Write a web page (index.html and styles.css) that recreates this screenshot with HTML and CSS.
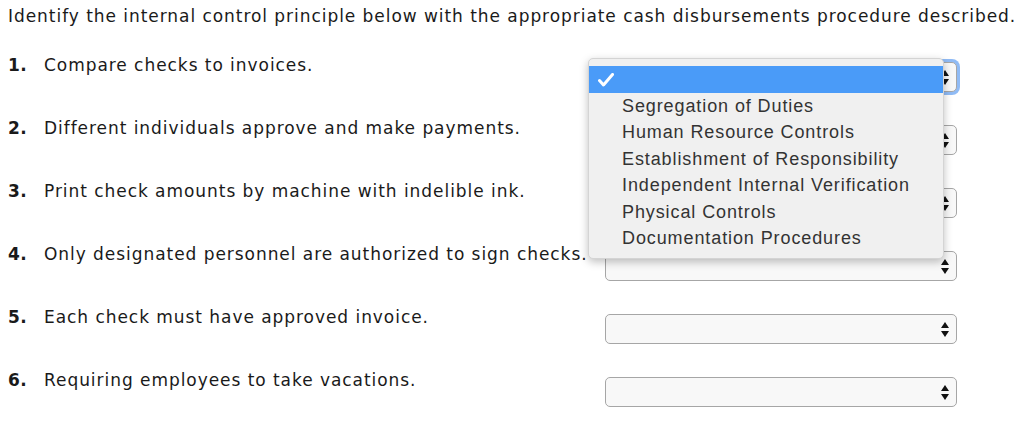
FILE: index.html
```html
<!DOCTYPE html>
<html lang="en">
  <head>
    <meta charset="UTF-8" />
    <meta name="viewport" content="width=device-width, initial-scale=1.0" />
    <title>Internal Control Principles</title>
    <link rel="stylesheet" href="styles.css">
  </head>
  <body>
    <div class="question">
      <p class="prompt">Identify the internal control principle below with the appropriate cash disbursements procedure described.</p>

      <ol class="items">
        <li class="item">
          <span class="num">1.</span>
          <span class="text">Compare checks to invoices.</span>
          <div class="picker is-open">
            <div class="answer"></div>
            <svg class="arrows" width="8" height="15" viewBox="0 0 8 15"><polygon points="0,6 4,0 8,6" /><polygon points="0,9 8,9 4,15" /></svg>
            <ul class="menu">
              <li class="menu-item selected">
                <svg class="check" width="16" height="14" viewBox="0 0 16 14"><polyline points="1.5,7.5 5.5,12 14.5,1.5" /></svg>
              </li>
              <li class="menu-item">Segregation of Duties</li>
              <li class="menu-item">Human Resource Controls</li>
              <li class="menu-item">Establishment of Responsibility</li>
              <li class="menu-item">Independent Internal Verification</li>
              <li class="menu-item">Physical Controls</li>
              <li class="menu-item">Documentation Procedures</li>
            </ul>
          </div>
        </li>
        <li class="item">
          <span class="num">2.</span>
          <span class="text">Different individuals approve and make payments.</span>
          <div class="picker">
            <div class="answer"></div>
            <svg class="arrows" width="8" height="15" viewBox="0 0 8 15"><polygon points="0,6 4,0 8,6" /><polygon points="0,9 8,9 4,15" /></svg>
          </div>
        </li>
        <li class="item">
          <span class="num">3.</span>
          <span class="text">Print check amounts by machine with indelible ink.</span>
          <div class="picker">
            <div class="answer"></div>
            <svg class="arrows" width="8" height="15" viewBox="0 0 8 15"><polygon points="0,6 4,0 8,6" /><polygon points="0,9 8,9 4,15" /></svg>
          </div>
        </li>
        <li class="item">
          <span class="num">4.</span>
          <span class="text">Only designated personnel are authorized to sign checks.</span>
          <div class="picker">
            <div class="answer"></div>
            <svg class="arrows" width="8" height="15" viewBox="0 0 8 15"><polygon points="0,6 4,0 8,6" /><polygon points="0,9 8,9 4,15" /></svg>
          </div>
        </li>
        <li class="item">
          <span class="num">5.</span>
          <span class="text">Each check must have approved invoice.</span>
          <div class="picker">
            <div class="answer"></div>
            <svg class="arrows" width="8" height="15" viewBox="0 0 8 15"><polygon points="0,6 4,0 8,6" /><polygon points="0,9 8,9 4,15" /></svg>
          </div>
        </li>
        <li class="item">
          <span class="num">6.</span>
          <span class="text">Requiring employees to take vacations.</span>
          <div class="picker">
            <div class="answer"></div>
            <svg class="arrows" width="8" height="15" viewBox="0 0 8 15"><polygon points="0,6 4,0 8,6" /><polygon points="0,9 8,9 4,15" /></svg>
          </div>
        </li>
      </ol>
    </div>
  </body>
</html>
```

FILE: styles.css
```css
* {
  margin: 0;
  padding: 0;
  box-sizing: border-box;
}

body {
  font-family: Verdana, 'DejaVu Sans', sans-serif;
  font-size: 17px;
  letter-spacing: 0.95px;
  line-height: 20px;
  color: #1a1a1a;
  background: white;
  padding: 6px 8px;
}

.prompt {
  margin-bottom: 29px;
  white-space: nowrap;
}

.items {
  list-style: none;
}

.item {
  display: grid;
  grid-template-columns: 36px 561px 352px;
  align-items: start;
  height: 63px;
}

.num {
  font-weight: bold;
  letter-spacing: 0.4px;
}

.text {
  white-space: nowrap;
}

.picker {
  position: relative;
  margin-top: 7px;
}

.answer {
  height: 30px;
  background: #f8f8f8;
  border: 1px solid #a6a6a6;
  border-radius: 5px;
}

.arrows {
  position: absolute;
  right: 8px;
  top: 8px;
  fill: #111;
}

.is-open .answer {
  box-shadow: 0 0 0 3px rgba(84, 150, 240, 0.65);
}

/* open dropdown list of the first select */
.menu {
  position: absolute;
  left: -17px;
  top: -4px;
  width: 356px;
  padding: 7px 0 6px;
  list-style: none;
  background: #f0f0f0;
  border: 1px solid #d4d4d4;
  border-radius: 5px;
  box-shadow: 0 3px 9px rgba(0, 0, 0, 0.25);
  font-family: 'Liberation Sans', Arial, sans-serif;
  font-size: 18px;
  letter-spacing: 0.9px;
  color: #333;
  z-index: 2;
}

.menu-item {
  height: 26.5px;
  line-height: 26.5px;
  padding-left: 33px;
  white-space: nowrap;
}

.menu-item.selected {
  background: #4a9bf8;
  position: relative;
}

.check {
  position: absolute;
  left: 9px;
  top: 7px;
  fill: none;
  stroke: white;
  stroke-width: 3;
  stroke-linecap: round;
  stroke-linejoin: round;
}
```
